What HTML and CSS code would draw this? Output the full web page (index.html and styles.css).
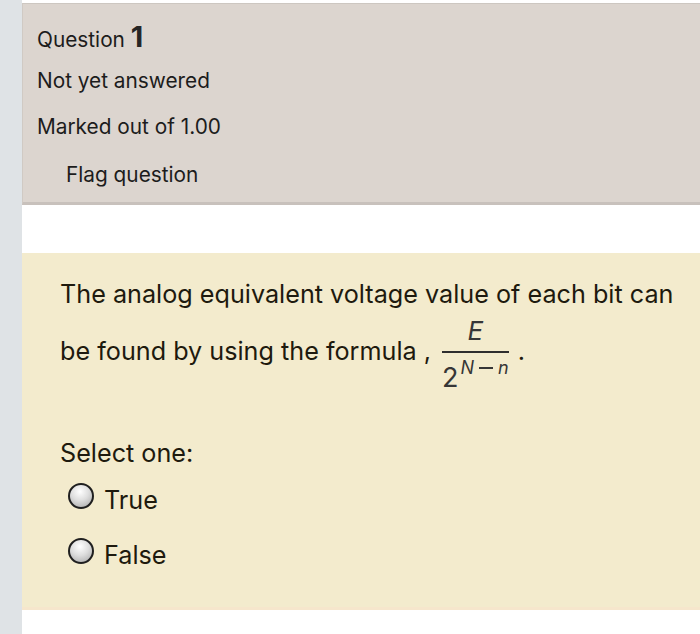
FILE: index.html
```html
<!DOCTYPE html>
<html lang="en">
<head>
<meta charset="utf-8">
<title>Question 1</title>
<link rel="stylesheet" href="styles.css">
</head>
<body>
<div class="page">
  <div class="sidebar"></div>
  <div class="main">
    <div class="info">
      <div class="row r1">Question <span class="qno">1</span></div>
      <div class="row r2">Not yet answered</div>
      <div class="row r3">Marked out of 1.00</div>
      <div class="row r4 flag">Flag question</div>
    </div>
    <div class="formulation">
      <div class="line l1">The analog equivalent voltage value of each bit can</div>
      <div class="line l2">be found by using the formula ,<span class="frac"><span class="num">E</span><span class="bar"></span><span class="den">2<span class="sup">N<span class="minus" aria-label="−"></span>n</span></span></span>.</div>
      <div class="line select">Select one:</div>
      <div class="opt opt1"><span class="radio"></span><span>True</span></div>
      <div class="opt opt2"><span class="radio"></span><span>False</span></div>
    </div>
  </div>
</div>
</body>
</html>
```

FILE: styles.css
```css
html, body {
  margin: 0;
  padding: 0;
  background: #ffffff;
}
body {
  font-family: Inter, "Noto Sans", sans-serif;
  width: 700px;
  height: 634px;
  overflow: hidden;
}
.page {
  display: flex;
  height: 634px;
}
.sidebar {
  width: 22px;
  flex: none;
  background: #dfe3e6;
}
.main {
  flex: 1;
  padding-top: 3px;
  background: #ffffff;
  display: flex;
  flex-direction: column;
}
.info {
  background: #dcd5cf;
  border-top: 1px solid #cdc7c1;
  border-left: 1px solid #d0cac4;
  border-bottom: 3px solid #c8c1bc;
  height: 202px;
  box-sizing: border-box;
  padding: 24px 0 0 14px;
  color: #1c1c1c;
  font-size: 20.8px;
  display: flex;
  flex-direction: column;
}
.row {
  height: 24px;
  line-height: 24px;
  white-space: nowrap;
}
.r2 { margin-top: 17px; }
.r3 { margin-top: 22px; }
.r4 { margin-top: 24px; }
.flag { padding-left: 29px; }
.qno {
  font-size: 29px;
  font-weight: 700;
  line-height: 0;
  color: #262626;
}
.formulation {
  margin-top: 48px;
  background: #f3ebcd;
  border-bottom: 3px solid #f6e6cc;
  height: 357px;
  box-sizing: border-box;
  padding: 25px 0 0 38px;
  color: #1e1a0e;
  font-size: 25.2px;
  display: flex;
  flex-direction: column;
}
.line {
  height: 32px;
  line-height: 32px;
  white-space: nowrap;
}
.l2 { margin-top: 25px; }
.select { margin-top: 70px; }
.frac {
  display: inline-flex;
  flex-direction: column;
  align-items: center;
  vertical-align: 20px;
  margin: -18px 6px -26px 8px;
  padding: 0 3px;
  color: #363636;
  font-size: 26px;
}
.num {
  font-style: italic;
  line-height: 26px;
  height: 26px;
}
.bar {
  align-self: stretch;
  height: 2px;
  background: #2e2e2e;
  margin-top: 7px;
}
.den {
  line-height: 26px;
  height: 26px;
  margin-top: 2px;
  white-space: nowrap;
  font-size: 27px;
}
.sup {
  font-size: 18px;
  font-style: italic;
  vertical-align: 13px;
  margin-left: 2px;
}
.minus {
  display: inline-block;
  width: 14px;
  height: 2px;
  background: #363636;
  vertical-align: 5px;
  margin: 0 5px 0 5px;
}
.opt {
  display: flex;
  align-items: flex-start;
  height: 32px;
  line-height: 32px;
  padding-left: 8px;
}
.opt1 { margin-top: 15px; }
.opt2 { margin-top: 23px; }
.radio {
  width: 22px;
  height: 22px;
  border: 2px solid #1f1f1f;
  border-radius: 50%;
  background: radial-gradient(circle at 45% 30%, #ffffff 0%, #dedede 45%, #a4a4a4 100%);
  margin-top: -1px;
  margin-right: 10px;
  flex: none;
}
```
